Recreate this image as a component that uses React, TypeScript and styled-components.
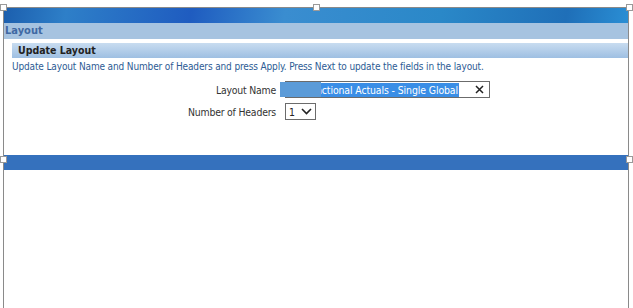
import * as React from "react"
import styled, { createGlobalStyle } from "styled-components"

const Global = createGlobalStyle`
  html, body { margin: 0; padding: 0; background: #fff; }
  body { font-family: "DejaVu Sans Condensed", "DejaVu Sans", Tahoma, sans-serif; font-stretch: condensed; }
`

const App = () => (
  <>
    <Global />
    <Frame>
      <Handle $x="left" $y={0} />
      <Handle $x="center" $y={0} />
      <Handle $x="right" $y={0} />
      <Handle $x="left" $y={152} />
      <Handle $x="right" $y={152} />
      <Banner />
      <PageTitle>Layout</PageTitle>
      <Section>
        <SectionHeader>Update Layout</SectionHeader>
        <Instruction>
          Update Layout Name and Number of Headers and press Apply. Press Next to update the fields in the layout.
        </Instruction>
        <FormGrid>
          <Label>Layout Name</Label>
          <TextField>
            <Redact />
            <Selected>functional Actuals - Single Global</Selected>
            <Clear width="9" height="9" viewBox="0 0 9 9">
              <path d="M1 1l7 7M8 1L1 8" stroke="#222" strokeWidth="1.5" />
            </Clear>
          </TextField>
          <Label>Number of Headers</Label>
          <Select>
            <span>1</span>
            <svg width="11" height="7" viewBox="0 0 11 7">
              <path d="M1 1l4.5 4.5L10 1" fill="none" stroke="#222" strokeWidth="1.6" />
            </svg>
          </Select>
        </FormGrid>
      </Section>
      <Footer />
    </Frame>
  </>
)

export default App

const Frame = styled.div`
  position: relative;
  margin: 7px 0 0 3px;
  width: 624px;
  height: 301px;
  border: 1px solid #8a8a8a;
  border-bottom: none;
`

const Handle = styled.div<{ $x: "left" | "center" | "right"; $y: number }>`
  position: absolute;
  top: ${(p) => p.$y - 4}px;
  left: ${(p) => (p.$x === "left" ? "-4px" : p.$x === "center" ? "calc(50% - 3px)" : "auto")};
  right: ${(p) => (p.$x === "right" ? "-5px" : "auto")};
  width: 5px;
  height: 5px;
  background: #fff;
  border: 1px solid #9a9a9a;
  z-index: 2;
`

const Banner = styled.div`
  height: 15px;
  background: linear-gradient(100deg, #1c5fae 0%, #2e7fc8 10%, #1f5cc0 30%, #3a8dd0 45%, #2a88c8 70%, #1f6fb8 90%, #2a8ed4 100%);
`

const PageTitle = styled.div`
  height: 16px;
  line-height: 16px;
  background: #a6c3e0;
  color: #4069a3;
  font-weight: bold;
  font-size: 11px;
  padding-left: 1px;
`

const Section = styled.div`
  padding: 4px 0 0 8px;
`

const SectionHeader = styled.div`
  height: 15px;
  line-height: 15px;
  background: linear-gradient(#c8dcf0, #9ebfe2);
  color: #222;
  font-weight: bold;
  font-size: 10.5px;
  padding-left: 6px;
`

const Instruction = styled.div`
  margin-top: 2px;
  color: #2d5b94;
  font-size: 10px;
  line-height: 14px;
  letter-spacing: -0.14px;
`

const FormGrid = styled.div`
  display: grid;
  grid-template-columns: 264px auto;
  column-gap: 9px;
  row-gap: 5px;
  align-items: center;
  justify-items: start;
  margin-top: 7px;
  height: 74px;
  align-content: start;
`

const Label = styled.div`
  justify-self: end;
  color: #333;
  font-size: 10.4px;
  letter-spacing: -0.2px;
`

const TextField = styled.div`
  position: relative;
  width: 203px;
  height: 15px;
  border: 1px solid #6b6b6b;
  display: flex;
  align-items: center;
`

const Redact = styled.div`
  position: absolute;
  left: -6px;
  top: 0;
  width: 41px;
  height: 15px;
  background: #5b9bd8;
  z-index: 1;
`

const Selected = styled.div`
  background: #3a8ee6;
  color: #fff;
  font-size: 10.4px;
  letter-spacing: -0.1px;
  line-height: 14px;
  width: 173px;
  text-align: right;
  padding-right: 1px;
  box-sizing: border-box;
  white-space: nowrap;
  overflow: hidden;
  direction: rtl;
`

const Clear = styled.svg`
  margin-left: auto;
  margin-right: 5px;
`

const Select = styled.div`
  height: 15px;
  border: 1px solid #6b6b6b;
  display: flex;
  align-items: center;
  justify-content: space-between;
  padding: 0 3px;
  width: 23px;
  font-size: 10.4px;
  color: #222;
`

const Footer = styled.div`
  height: 15px;
  background: #3571bd;
`
